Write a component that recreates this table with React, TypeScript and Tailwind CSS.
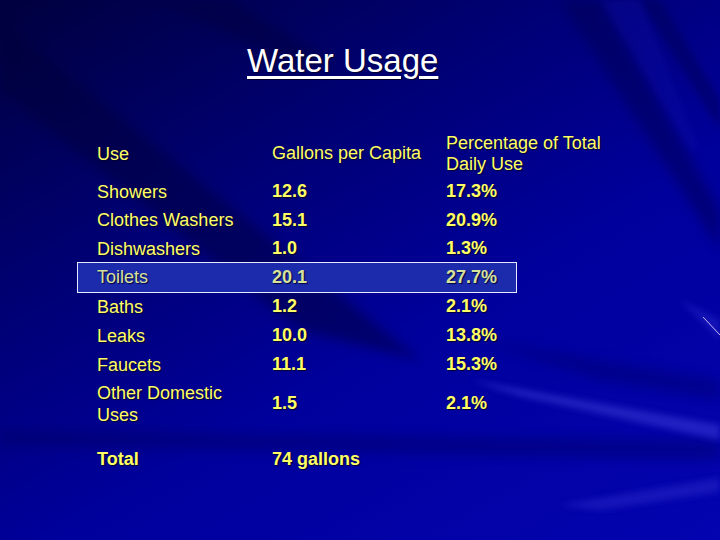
import React from "react";

const Y = "text-[#ffff66] [text-shadow:1px_1px_1px_#000030]";

function Backdrop() {
  return (
    <svg className="absolute inset-0" width="720" height="540" viewBox="0 0 720 540">
      <defs>
        <filter id="b6" x="-20%" y="-20%" width="140%" height="140%">
          <feGaussianBlur stdDeviation="6" />
        </filter>
        <filter id="b3" x="-20%" y="-20%" width="140%" height="140%">
          <feGaussianBlur stdDeviation="3" />
        </filter>
      </defs>
      {/* dark bands */}
      <polygon points="0,20 0,90 300,330 420,360" fill="#000038" opacity="0.45" filter="url(#b6)" />
      <polygon points="160,0 230,0 330,60 300,70" fill="#000040" opacity="0.5" filter="url(#b6)" />
      <polygon points="560,0 600,0 720,210 720,250" fill="#000050" opacity="0.45" filter="url(#b6)" />
      <polygon points="640,0 660,0 720,100 720,130" fill="#000050" opacity="0.4" filter="url(#b3)" />
      <polygon points="0,430 0,445 720,460 720,440" fill="#00005a" opacity="0.35" filter="url(#b6)" />
      <polygon points="480,340 720,380 720,400 600,380" fill="#00006a" opacity="0.4" filter="url(#b6)" />
      {/* light bands */}
      <polygon points="470,380 720,425 720,440 520,396" fill="#3a3ad8" opacity="0.55" filter="url(#b3)" />
      <polygon points="560,505 720,478 720,492 600,510" fill="#3030d0" opacity="0.4" filter="url(#b3)" />
      <polygon points="680,300 720,320 720,340" fill="#4040e0" opacity="0.3" filter="url(#b3)" />
      <polygon points="600,0 640,0 700,150 690,150" fill="#1818b8" opacity="0.2" filter="url(#b3)" />
      <line x1="703" y1="317" x2="720" y2="335" stroke="#c8b8ff" strokeWidth="1" />
    </svg>
  );
}

type RowProps = { a: React.ReactNode; b: React.ReactNode; c: React.ReactNode; h: string; bold?: boolean; aBold?: boolean };

function Row({ a, b, c, h, bold = true, aBold = false }: RowProps) {
  return (
    <div className={`flex items-center ${h} w-full`}>
      <div className={`w-[195px] pl-[20px] leading-[22px] ${aBold ? "font-bold" : ""}`}>{a}</div>
      <div className={`w-[174px] ${bold ? "font-bold" : ""}`}>{b}</div>
      <div className={`flex-1 leading-[21px] ${bold ? "font-bold" : ""}`}>{c}</div>
    </div>
  );
}

export default function App() {
  return (
    <div className="relative w-[720px] h-[540px] overflow-hidden bg-[linear-gradient(150deg,#00003e_0%,#000070_30%,#00009c_60%,#0404b0_100%)] font-['Liberation_Sans',Arial,sans-serif]">
      <Backdrop />
      <div className="relative flex flex-col">
        <div className="pt-[41px] pl-[247px] h-[130px]">
          <span className="text-white text-[33px] leading-[40px] underline decoration-[3px] underline-offset-[4px] [text-shadow:1px_1px_1px_#000030]">
            Water Usage
          </span>
        </div>
        <div className={`ml-[77px] w-[600px] flex flex-col text-[18px] ${Y}`}>
          <Row h="h-[47px]" bold={false} a="Use" b="Gallons per Capita" c={<>Percentage of Total<br />Daily Use</>} />
          <Row h="h-[29px]" a="Showers" b="12.6" c="17.3%" />
          <Row h="h-[28px]" a="Clothes Washers" b="15.1" c="20.9%" />
          <Row h="h-[29px]" a="Dishwashers" b="1.0" c="1.3%" />
          <div className="w-[440px] h-[31px] -my-px border border-[#e8e8ff] bg-[#1c2aac] flex items-center text-[#d6e29c] [text-shadow:1px_1px_1px_#000040]">
            <div className="w-[194px] pl-[19px]">Toilets</div>
            <div className="w-[174px] font-bold">20.1</div>
            <div className="flex-1 font-bold">27.7%</div>
          </div>
          <Row h="h-[29px]" a="Baths" b="1.2" c="2.1%" />
          <Row h="h-[29px]" a="Leaks" b="10.0" c="13.8%" />
          <Row h="h-[29px]" a="Faucets" b="11.1" c="15.3%" />
          <Row h="h-[49px]" a={<>Other Domestic<br />Uses</>} b="1.5" c="2.1%" />
          <div className="h-[16px]" />
          <Row h="h-[30px]" aBold a="Total" b="74 gallons" c="" />
        </div>
      </div>
    </div>
  );
}
